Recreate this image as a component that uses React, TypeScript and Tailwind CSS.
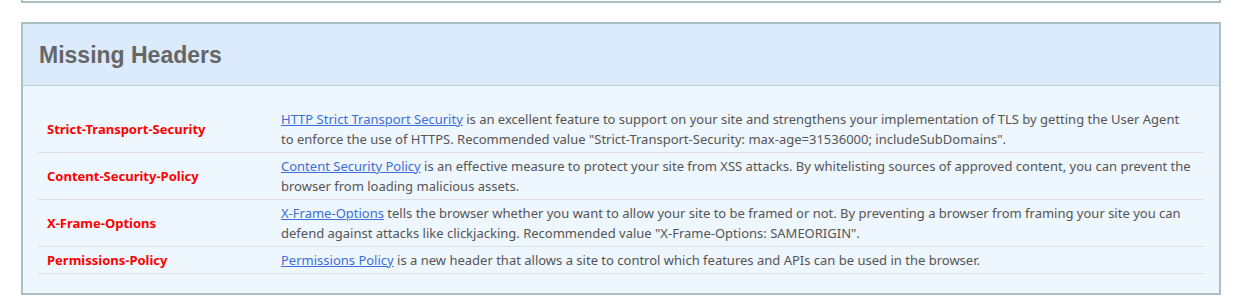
const rows = [
  {
    name: "Strict-Transport-Security",
    link: "HTTP Strict Transport Security",
    text: ' is an excellent feature to support on your site and strengthens your implementation of TLS by getting the User Agent to enforce the use of HTTPS. Recommended value "Strict-Transport-Security: max-age=31536000; includeSubDomains".',
  },
  {
    name: "Content-Security-Policy",
    link: "Content Security Policy",
    text: " is an effective measure to protect your site from XSS attacks. By whitelisting sources of approved content, you can prevent the browser from loading malicious assets.",
  },
  {
    name: "X-Frame-Options",
    link: "X-Frame-Options",
    text: ' tells the browser whether you want to allow your site to be framed or not. By preventing a browser from framing your site you can defend against attacks like clickjacking. Recommended value "X-Frame-Options: SAMEORIGIN".',
  },
  {
    name: "Permissions-Policy",
    link: "Permissions Policy",
    text: " is a new header that allows a site to control which features and APIs can be used in the browser.",
  },
];

export default function App() {
  return (
    <div className="w-[1236px] h-[308px] bg-white overflow-hidden">
      {/* tail of the panel above */}
      <div className="ml-[21px] w-[1200px] h-[3px] border-x-2 border-b-2 border-[#a9c0c4]" />

      <div className="ml-[21px] w-[1200px] mt-[19px] border-2 border-[#a9c0c4] bg-[#eef6fe]">
        <div className="h-[62px] flex items-center pl-[16px] bg-[#dbebfc] border-b border-[#b9cfd8]">
          <h2 className="font-['Liberation_Sans',Arial,sans-serif] font-bold text-[23px] text-[#666666] pt-[1px]">
            Missing Headers
          </h2>
        </div>

        <div className="pt-[20px] pb-[19px] pl-[15px] pr-[15px]">
          {rows.map((r) => (
            <div
              key={r.name}
              className="flex border-b border-[#dcdfe2] font-['Noto_Sans','Open_Sans',sans-serif] text-[13px] leading-[20px]"
            >
              <div className="w-[234px] shrink-0 flex items-center px-[9px] py-[3px] font-bold text-[#ff0000]">
                {r.name}
              </div>
              <div className="flex-1 px-[9px] py-[3px] text-[#555555]">
                <a href="#" className="text-[#3c6fd8] underline">
                  {r.link}
                </a>
                {r.text}
              </div>
            </div>
          ))}
        </div>
      </div>
    </div>
  );
}
